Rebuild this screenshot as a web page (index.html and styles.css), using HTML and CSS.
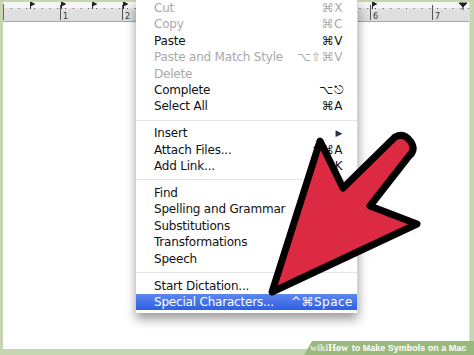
FILE: index.html
```html
<!DOCTYPE html>
<html lang="en">
<head>
    <meta charset="UTF-8">
    <title>How to Make Symbols on a Mac</title>
    <link rel="stylesheet" href="styles.css">
</head>
<body>
    <div class="doc">
        <div class="ruler">
            <svg class="ruler-marks" width="467" height="19" viewBox="3 2 467 19">
                <line x1="3" y1="8.5" x2="470" y2="8.5" stroke="#555" stroke-width="1" stroke-dasharray="1 6.75"/>
                <line x1="3.5" y1="4" x2="3.5" y2="20" stroke="#666"/>
                <line x1="60.5" y1="5" x2="60.5" y2="20" stroke="#555"/>
                <line x1="122.5" y1="5" x2="122.5" y2="20" stroke="#555"/>
                <line x1="370.5" y1="5" x2="370.5" y2="20" stroke="#555"/>
                <line x1="432.5" y1="5" x2="432.5" y2="20" stroke="#555"/>
                <text x="63" y="19">1</text>
                <text x="125" y="19">2</text>
                <text x="373" y="19">6</text>
                <text x="435" y="19">7</text>
                <g fill="#222" stroke="#222" stroke-width="1">
                    <path d="M30.5 2v7M30.5 2l4 2-4 2z"/>
                    <path d="M61.5 2v7M61.5 2l4 2-4 2z"/>
                    <path d="M92.5 2v7M92.5 2l4 2-4 2z"/>
                    <path d="M123.5 2v7M123.5 2l4 2-4 2z"/>
                    <path d="M372.5 2v7M372.5 2l4 2-4 2z"/>
                    <path d="M459 3h8l-4 4z M463 7v3"/>
                </g>
            </svg>
        </div>
    </div>

    <div class="menu">
        <div class="item disabled"><span>Cut</span><span class="keys">⌘X</span></div>
        <div class="item disabled"><span>Copy</span><span class="keys">⌘C</span></div>
        <div class="item"><span>Paste</span><span class="keys">⌘V</span></div>
        <div class="item disabled"><span>Paste and Match Style</span><span class="keys">⌥⇧⌘V</span></div>
        <div class="item disabled"><span>Delete</span></div>
        <div class="item"><span>Complete</span><span class="keys">⌥⎋</span></div>
        <div class="item"><span>Select All</span><span class="keys">⌘A</span></div>
        <div class="sep"></div>
        <div class="item"><span>Insert</span><span class="keys arrow-key">▶</span></div>
        <div class="item"><span>Attach Files...</span><span class="keys">⇧⌘A</span></div>
        <div class="item"><span>Add Link...</span><span class="keys">⌘K</span></div>
        <div class="sep"></div>
        <div class="item"><span>Find</span><span class="keys arrow-key">▶</span></div>
        <div class="item"><span>Spelling and Grammar</span><span class="keys arrow-key">▶</span></div>
        <div class="item"><span>Substitutions</span><span class="keys arrow-key">▶</span></div>
        <div class="item"><span>Transformations</span><span class="keys arrow-key">▶</span></div>
        <div class="item"><span>Speech</span><span class="keys arrow-key">▶</span></div>
        <div class="sep"></div>
        <div class="item"><span>Start Dictation...</span></div>
        <div class="item selected"><span>Special Characters...</span><span class="keys">^⌘Space</span></div>
    </div>

    <svg class="pointer" width="474" height="355" viewBox="0 0 474 355">
        <path d="M272 292 L320 141 L343 188 L395 137 Q404 132 411 142 Q416 150 409 156 L370 206 L417 224 Z"
              fill="#dd2a43" stroke="#000" stroke-width="7" stroke-linejoin="round"/>
    </svg>

    <div class="banner">
        <span class="wiki">wiki</span><span class="how">How</span> to Make Symbols on a Mac
    </div>
</body>
</html>
```

FILE: styles.css
```css
:root {
    --frame-green: #c6d6b0;
    --banner-green: #9ab97c;
    --menu-text: #111111;
    --menu-disabled: #a9a9a9;
}

body {
    margin: 0;
    width: 474px;
    height: 355px;
    box-sizing: border-box;
    padding: 2px 4px 6px 3px;
    background: var(--frame-green);
    position: relative;
    overflow: hidden;
    font-family: "DejaVu Sans", "Liberation Sans", sans-serif;
}

.doc {
    height: 100%;
    background: #ffffff;
    border-right: 1px solid #dedede;
}

.ruler {
    height: 19px;
    background: linear-gradient(#f5f5f5 0, #f5f5f5 30%, #e2e2e2 35%, #dcdcdc 100%);
    border-bottom: 1px solid #a8a8a8;
}

.ruler-marks {
    display: block;
}

.ruler-marks text {
    font-family: "DejaVu Sans", sans-serif;
    font-size: 8px;
    fill: #333;
}

.menu {
    position: absolute;
    left: 136px;
    top: 0;
    width: 221px;
    padding-bottom: 3px;
    background: #ffffff;
    border-right: 1px solid #d4d4d4;
    box-shadow: 0 6px 10px rgba(0, 0, 0, 0.4);
    font-size: 12px;
    letter-spacing: -0.2px;
    color: var(--menu-text);
}

.item {
    display: flex;
    justify-content: space-between;
    height: 16.4px;
    line-height: 16.4px;
    padding: 0 14px 0 18px;
    white-space: nowrap;
}

.item.disabled {
    color: var(--menu-disabled);
}

.keys {
    letter-spacing: 0.5px;
}

.arrow-key {
    font-size: 9px;
    color: #333;
}

.item.selected {
    padding-right: 4px;
    color: #ffffff;
    background: linear-gradient(#5d87ee, #2f5fe2);
}

.sep {
    height: 10.6px;
    display: flex;
    align-items: center;
}

.sep::before {
    content: "";
    display: block;
    width: 100%;
    height: 1px;
    background: #e3e3e3;
}

.pointer {
    position: absolute;
    left: 0;
    top: 0;
}

.banner {
    position: absolute;
    right: 0;
    bottom: 0;
    width: 170px;
    height: 14px;
    padding-left: 6px;
    box-sizing: border-box;
    background: var(--banner-green);
    clip-path: polygon(8px 0, 100% 0, 100% 100%, 0 100%);
    font-family: "Liberation Sans", sans-serif;
    font-weight: bold;
    font-size: 9px;
    line-height: 14px;
    color: #ffffff;
    white-space: nowrap;
}

.wiki {
    font-family: "Liberation Serif", serif;
    color: #e4e8dc;
    font-size: 10px;
}

.how {
    font-family: "Liberation Serif", serif;
    font-size: 10px;
    margin-right: 1px;
}
```
